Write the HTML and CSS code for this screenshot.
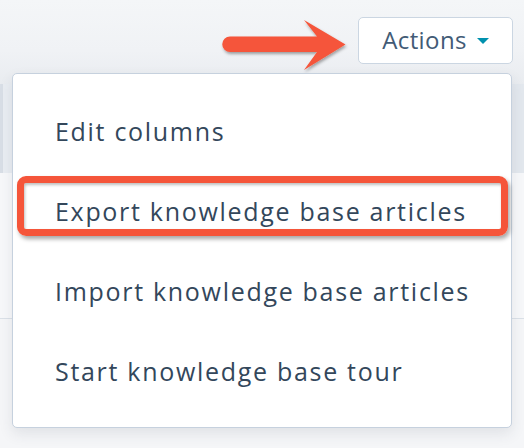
FILE: index.html
```html
<!DOCTYPE html>
<html lang="en">
<head>
<meta charset="utf-8">
<title>Actions menu</title>
<link rel="stylesheet" href="styles.css">
</head>
<body>
<div class="page">
  <header class="toolbar">
    <svg class="arrow" width="140" height="60" viewBox="215 10 140 60" aria-hidden="true">
      <defs>
        <filter id="sh" x="-20%" y="-30%" width="140%" height="170%">
          <feDropShadow dx="1" dy="2" stdDeviation="1.5" flood-color="#000" flood-opacity="0.35"/>
        </filter>
      </defs>
      <path filter="url(#sh)" fill="#f5553a" d="M230 29.5 H317 L304 13 L345.5 37.5 L304 63 L317 45 H230 A7.75 7.75 0 0 1 230 29.5 Z"/>
    </svg>
    <button class="actions-btn" type="button">Actions<span class="caret"></span></button>
  </header>
  <div class="table">
    <div class="thead"></div>
    <div class="trow"></div>
    <div class="trest"></div>
  </div>
  <ul class="menu">
    <li class="item">Edit columns</li>
    <li class="item">Export knowledge base articles</li>
    <li class="item">Import knowledge base articles</li>
    <li class="item">Start knowledge base tour</li>
    <li class="highlight" aria-hidden="true"></li>
  </ul>
</div>
</body>
</html>
```

FILE: styles.css
```css
* { box-sizing: border-box; }
html, body {
  margin: 0;
  padding: 0;
}
body {
  width: 524px;
  height: 448px;
  overflow: hidden;
  font-family: "Open Sans", "Liberation Sans", sans-serif;
  color: #33475b;
  background: #f5f6f8;
}
.page {
  position: relative;
  width: 524px;
  height: 448px;
  display: flex;
  flex-direction: column;
}
.toolbar {
  height: 84px;
  flex: none;
  display: flex;
  justify-content: flex-end;
  align-items: flex-start;
  padding: 17px 11px 0 0;
  background: linear-gradient(#f4f6f8, #f0f2f5 60%, #e9ecf0);
}
.arrow {
  display: block;
  margin: 0 3px 0 0;
}
.actions-btn {
  width: 155px;
  height: 47px;
  border: 1.5px solid #cbd6e2;
  border-radius: 5px;
  background: #fff;
  color: #425b76;
  font-family: inherit;
  font-size: 24px;
  letter-spacing: 0.4px;
  display: flex;
  align-items: center;
  justify-content: center;
  gap: 10px;
  padding: 0 0 2px 0;
}
.caret {
  width: 0;
  height: 0;
  border-left: 6px solid transparent;
  border-right: 6px solid transparent;
  border-top: 6px solid #0091ae;
  margin-top: 2px;
}
.table {
  flex: 1;
  display: flex;
  flex-direction: column;
}
.thead {
  height: 89px;
  background: #e3e8ee;
  border-left: 3px solid #d8dee6;
  box-shadow: inset 10px 0 0 #e9edf2;
}
.trow {
  height: 146px;
  background: #f7f8fa;
  border-bottom: 1px solid #dbe1e8;
}
.trest {
  flex: 1;
  background: #f5f6f8;
}
.menu {
  position: absolute;
  left: 12px;
  top: 73px;
  width: 500px;
  height: 355px;
  margin: 0;
  padding: 17px 0 0 0;
  list-style: none;
  background: #fff;
  border: 1.5px solid #c6d1de;
  border-radius: 5px;
  box-shadow: 0 6px 14px rgba(45, 62, 80, 0.10);
}
.item {
  height: 80px;
  line-height: 80px;
  padding-left: 42px;
  font-size: 25px;
  letter-spacing: 1.7px;
  white-space: nowrap;
}
.highlight {
  position: absolute;
  left: 4px;
  top: 102px;
  width: 491px;
  height: 60px;
  border: 7px solid #f5553a;
  border-radius: 9px;
  box-shadow: 2px 3px 4px rgba(0, 0, 0, 0.35), inset 1px 2px 3px rgba(0, 0, 0, 0.25);
}
```
